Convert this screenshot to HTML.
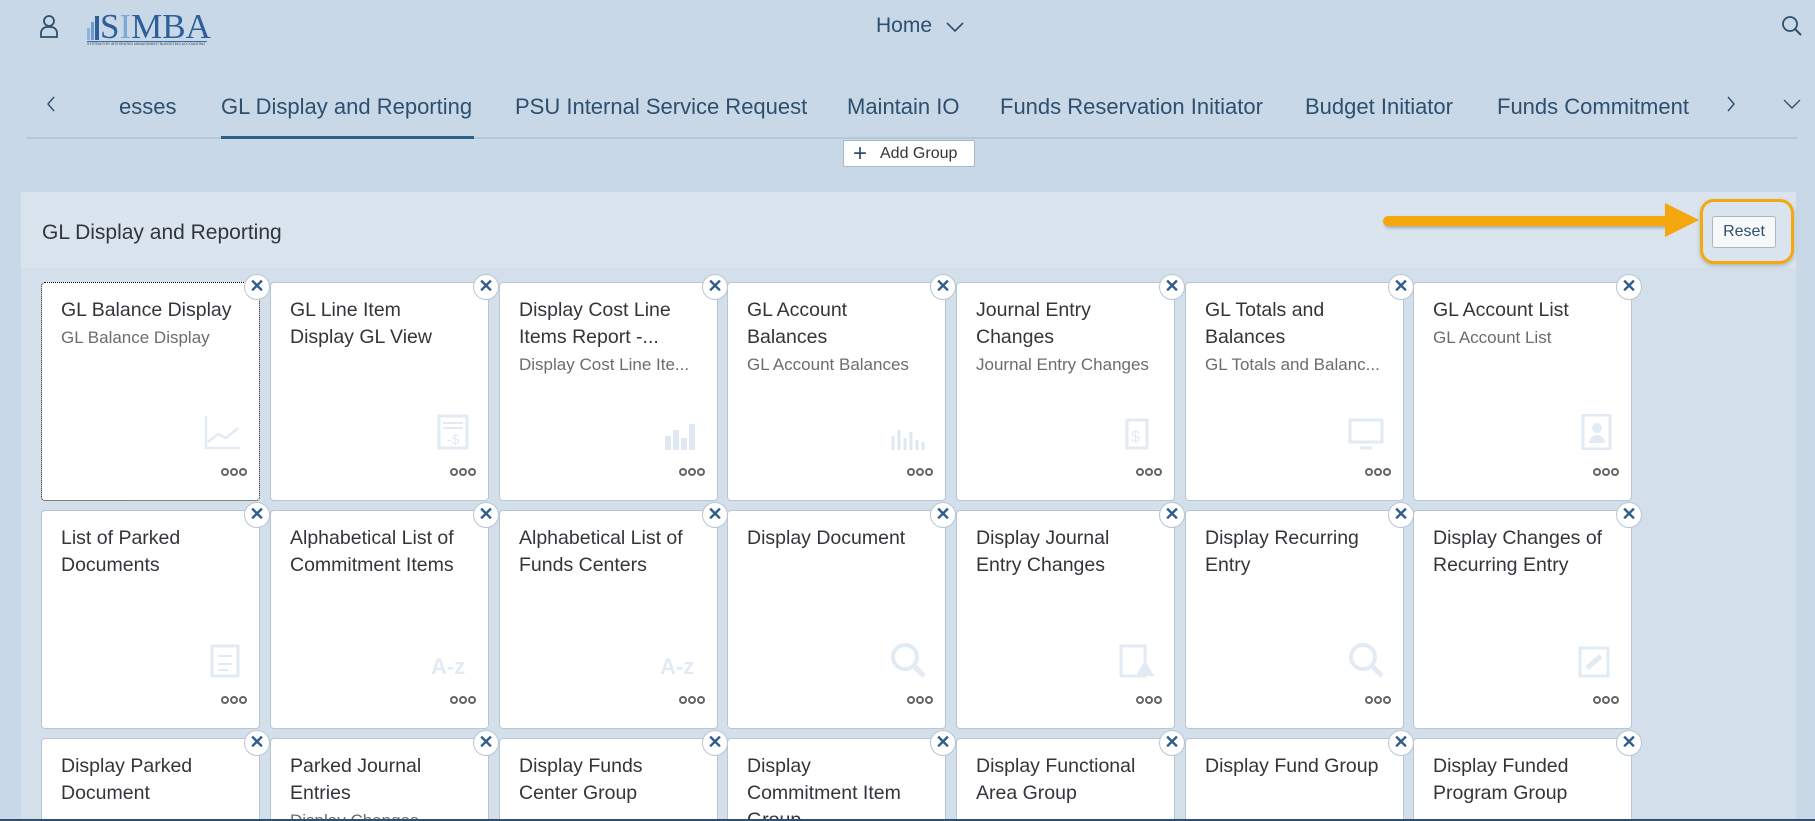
<!DOCTYPE html>
<html><head><meta charset="utf-8">
<style>
*{box-sizing:border-box;margin:0;padding:0}
html,body{width:1815px;height:821px;overflow:hidden}
body{background:#c8d8e7;font-family:"Liberation Sans",sans-serif}
#w{position:relative;width:1815px;height:821px;overflow:hidden}
.abs{position:absolute}
.tab{position:absolute;top:94px;font-size:22px;color:#2e4f6e;white-space:nowrap}
.tile{position:absolute;width:219px;height:219px;background:#fff;border:1px solid #b8c6d3;border-radius:4px}
.tile.r3{height:83px;border-bottom:none;border-radius:4px 4px 0 0;overflow:visible}
.tile .t{position:absolute;left:19px;top:14px;right:25px;font-size:19.5px;line-height:27px;color:#32363a}
.tile.r3 .t{height:68px;overflow:hidden}
.tile .s{font-size:17px;color:#6a6d70;line-height:27px;white-space:nowrap;overflow:hidden;text-overflow:ellipsis;margin-right:-10px}
.tile .x{position:absolute;right:-11px;top:-9px;width:26px;height:26px;border-radius:50%;background:#fff;border:1px solid #b8c6d3;color:#2f5e8c;font-size:18px;line-height:23px;text-align:center;font-weight:bold}
.tile .d{position:absolute;right:12px;bottom:22px;font-size:10px;line-height:8px}
.tile .d i{display:inline-block;width:8px;height:8px;border:2px solid #666;border-radius:50%;margin-left:1px}
.tile svg{position:absolute;right:19px;bottom:50px}
</style></head><body><div id="w">
<!-- header -->
<svg class="abs" style="left:39px;top:14px" width="20" height="24" viewBox="0 0 20 24"><circle cx="10" cy="7" r="5" fill="none" stroke="#2e4f6e" stroke-width="1.8"/><path d="M2 23v-4a6 6 0 0 1 6-6h4a6 6 0 0 1 6 6v4z" fill="none" stroke="#2e4f6e" stroke-width="1.8"/></svg>
<div class="abs" style="left:87px;top:10px;width:120px;height:36px">
 <div class="abs" style="left:0;top:18px;width:3px;height:12px;background:#8ab4dc"></div>
 <div class="abs" style="left:4px;top:12px;width:3px;height:18px;background:#6a9bd0"></div>
 <div class="abs" style="left:8px;top:6px;width:4px;height:24px;background:#2e5f9a"></div>
 <div class="abs" style="left:13px;top:2px;font-family:'Liberation Serif',serif;font-size:35px;line-height:30px;color:#2e5f9a">S<span style="color:#7fa9d6">I</span>MBA</div>
 <div class="abs" style="left:0;top:31px;width:120px;height:1px;background:#3a6ea5"></div>
 <div class="abs" style="left:0;top:33px;font-size:3.5px;line-height:3px;color:#345;white-space:nowrap">SYSTEM FOR INTEGRATED MANAGEMENT BUDGETING ACCOUNTING</div>
</div>
<div class="abs" style="left:876px;top:14px;font-size:21px;color:#2e4f6e">Home</div>
<svg class="abs" style="left:945px;top:21px" width="20" height="12"><path d="M2 2l8 8 8-8" fill="none" stroke="#2e4f6e" stroke-width="1.6"/></svg>
<svg class="abs" style="left:1781px;top:15px" width="22" height="22"><circle cx="9" cy="9" r="7" fill="none" stroke="#2e4f6e" stroke-width="1.8"/><path d="M14 14l6 6" stroke="#2e4f6e" stroke-width="2"/></svg>
<!-- tabs -->
<svg class="abs" style="left:46px;top:96px" width="10" height="16"><path d="M8 1L2 8l6 7" fill="none" stroke="#2e4f6e" stroke-width="1.4"/></svg>
<div class="tab" style="left:119px">esses</div>
<div class="tab" style="left:221px">GL Display and Reporting</div>
<div class="tab" style="left:515px">PSU Internal Service Request</div>
<div class="tab" style="left:847px">Maintain IO</div>
<div class="tab" style="left:1000px">Funds Reservation Initiator</div>
<div class="tab" style="left:1305px">Budget Initiator</div>
<div class="tab" style="left:1497px">Funds Commitment</div>
<svg class="abs" style="left:1726px;top:96px" width="10" height="16"><path d="M2 1l6 7-6 7" fill="none" stroke="#2e4f6e" stroke-width="1.4"/></svg>
<svg class="abs" style="left:1782px;top:98px" width="20" height="12"><path d="M2 2l8 8 8-8" fill="none" stroke="#2e4f6e" stroke-width="1.4"/></svg>
<div class="abs" style="left:27px;top:137px;width:1770px;height:2px;background:#b5c8da"></div>
<div class="abs" style="left:221px;top:136px;width:253px;height:3px;background:#2e5f8c"></div>
<div class="abs" style="left:843px;top:140px;width:132px;height:27px;background:#fff;border:1px solid #a8b8c8;border-radius:2px;font-size:16px;color:#32363a;line-height:25px;padding-left:36px">Add Group</div>
<div class="abs" style="left:853px;top:144px;font-size:24px;line-height:20px;color:#2e4f6e">+</div>
<!-- panel -->
<div class="abs" style="left:21px;top:192px;width:1775px;height:629px;background:#d3dfea"></div>
<div class="abs" style="left:21px;top:192px;width:1775px;height:76px;background:#d9e4ee"></div>
<div class="abs" style="left:42px;top:221px;font-size:21px;color:#32363a">GL Display and Reporting</div>
<div class="abs" style="left:1383px;top:216px;width:290px;height:10px;background:#f5a70e;border-radius:5px;box-shadow:1px 2px 3px rgba(0,0,0,.25)"></div>
<svg class="abs" style="left:1665px;top:203px" width="36" height="36"><path d="M0 0L34 17 0 34z" fill="#f5a70e"/></svg>
<div class="abs" style="left:1700px;top:199px;width:94px;height:65px;border:3px solid #f5a70e;border-radius:14px;box-shadow:0 2px 4px rgba(0,0,0,.2)"></div>
<div class="abs" style="left:1712px;top:216px;width:64px;height:32px;background:#f7f8fa;border:1px solid #a8b8c8;border-radius:3px;font-size:16px;color:#2e4f6e;text-align:center;line-height:30px">Reset</div>

<!-- row 1 -->
<div class="tile" style="left:41px;top:282px;border:1px dotted #000"><div class="t">GL Balance Display<div class="s">GL Balance Display</div></div><svg width="36" height="36"><path d="M2 2v32h34M4 28l10-8 8 4 12-10" fill="none" stroke="#e2ebf4" stroke-width="2.5"/></svg><div class="x">✕</div><div class="d"><i></i><i></i><i></i></div></div>
<div class="tile" style="left:270px;top:282px"><div class="t">GL Line Item Display GL View</div><svg width="32" height="36"><rect x="2" y="2" width="28" height="32" fill="none" stroke="#e2ebf4" stroke-width="3"/><path d="M6 9h20M6 14h20" stroke="#e2ebf4" stroke-width="2"/><text x="10" y="30" font-size="14" fill="#e2ebf4" font-family="Liberation Sans">-$</text></svg><div class="x">✕</div><div class="d"><i></i><i></i><i></i></div></div>
<div class="tile" style="left:499px;top:282px"><div class="t">Display Cost Line Items Report -...<div class="s">Display Cost Line Ite...</div></div><svg width="34" height="34"><path d="M4 34V20M12 34V14M20 34V22M28 34V8" stroke="#dfe8f2" stroke-width="6"/></svg><div class="x">✕</div><div class="d"><i></i><i></i><i></i></div></div>
<div class="tile" style="left:727px;top:282px"><div class="t">GL Account Balances<div class="s">GL Account Balances</div></div><svg width="36" height="24"><path d="M3 24V10M9 24V4M15 24V12M21 24V6M27 24V14M33 24V16" stroke="#dfe8f2" stroke-width="3"/></svg><div class="x">✕</div><div class="d"><i></i><i></i><i></i></div></div>
<div class="tile" style="left:956px;top:282px"><div class="t">Journal Entry Changes<div class="s">Journal Entry Changes</div></div><svg width="30" height="36"><path d="M2 6h20v28H2z" fill="none" stroke="#e2ebf4" stroke-width="3"/><text x="6" y="28" font-size="16" fill="#e2ebf4">$</text></svg><div class="x">✕</div><div class="d"><i></i><i></i><i></i></div></div>
<div class="tile" style="left:1185px;top:282px"><div class="t">GL Totals and Balances<div class="s">GL Totals and Balanc...</div></div><svg width="36" height="32"><rect x="2" y="2" width="32" height="22" fill="none" stroke="#e2ebf4" stroke-width="3"/><path d="M12 30h12" stroke="#e2ebf4" stroke-width="3"/></svg><div class="x">✕</div><div class="d"><i></i><i></i><i></i></div></div>
<div class="tile" style="left:1413px;top:282px"><div class="t">GL Account List<div class="s">GL Account List</div></div><svg width="32" height="36"><rect x="3" y="1" width="27" height="34" fill="none" stroke="#e2ebf4" stroke-width="3"/><circle cx="17" cy="14" r="5" fill="#e2ebf4"/><path d="M9 29a8 8 0 0 1 16 0z" fill="#e2ebf4"/></svg><div class="x">✕</div><div class="d"><i></i><i></i><i></i></div></div>
<!-- row 2 -->
<div class="tile" style="left:41px;top:510px"><div class="t">List of Parked Documents</div><svg width="30" height="36"><rect x="2" y="4" width="26" height="30" fill="none" stroke="#e2ebf4" stroke-width="3"/><path d="M8 14h14M8 22h14M8 28h10" stroke="#e2ebf4" stroke-width="2"/></svg><div class="x">✕</div><div class="d"><i></i><i></i><i></i></div></div>
<div class="tile" style="left:270px;top:510px"><div class="t">Alphabetical List of Commitment Items</div><svg width="38" height="26"><text x="0" y="22" font-size="22" font-weight="bold" fill="#e2ebf4" font-family="Liberation Sans">A-z</text></svg><div class="x">✕</div><div class="d"><i></i><i></i><i></i></div></div>
<div class="tile" style="left:499px;top:510px"><div class="t">Alphabetical List of Funds Centers</div><svg width="38" height="26"><text x="0" y="22" font-size="22" font-weight="bold" fill="#e2ebf4" font-family="Liberation Sans">A-z</text></svg><div class="x">✕</div><div class="d"><i></i><i></i><i></i></div></div>
<div class="tile" style="left:727px;top:510px"><div class="t">Display Document</div><svg width="36" height="36"><circle cx="15" cy="15" r="12" fill="none" stroke="#e2ebf4" stroke-width="4"/><path d="M24 24l10 10" stroke="#e2ebf4" stroke-width="5"/></svg><div class="x">✕</div><div class="d"><i></i><i></i><i></i></div></div>
<div class="tile" style="left:956px;top:510px"><div class="t">Display Journal Entry Changes</div><svg width="36" height="36"><rect x="2" y="4" width="24" height="30" fill="none" stroke="#e2ebf4" stroke-width="3"/><path d="M26 18l9 16H17z" fill="#e2ebf4"/></svg><div class="x">✕</div><div class="d"><i></i><i></i><i></i></div></div>
<div class="tile" style="left:1185px;top:510px"><div class="t">Display Recurring Entry</div><svg width="36" height="36"><circle cx="15" cy="15" r="12" fill="none" stroke="#e2ebf4" stroke-width="4"/><path d="M24 24l10 10" stroke="#e2ebf4" stroke-width="5"/></svg><div class="x">✕</div><div class="d"><i></i><i></i><i></i></div></div>
<div class="tile" style="left:1413px;top:510px"><div class="t">Display Changes of Recurring Entry</div><svg width="34" height="36"><rect x="2" y="6" width="28" height="28" fill="none" stroke="#e2ebf4" stroke-width="3"/><path d="M9 26l14-12" stroke="#e2ebf4" stroke-width="5"/></svg><div class="x">✕</div><div class="d"><i></i><i></i><i></i></div></div>
<!-- row 3 -->
<div class="tile r3" style="left:41px;top:738px"><div class="t">Display Parked Document</div><div class="x">✕</div></div>
<div class="tile r3" style="left:270px;top:738px"><div class="t">Parked Journal Entries<div class="s">Display Changes</div></div><div class="x">✕</div></div>
<div class="tile r3" style="left:499px;top:738px"><div class="t">Display Funds Center Group</div><div class="x">✕</div></div>
<div class="tile r3" style="left:727px;top:738px"><div class="t">Display Commitment Item Group</div><div class="x">✕</div></div>
<div class="tile r3" style="left:956px;top:738px"><div class="t">Display Functional Area Group</div><div class="x">✕</div></div>
<div class="tile r3" style="left:1185px;top:738px"><div class="t" style="white-space:nowrap">Display Fund Group</div><div class="x">✕</div></div>
<div class="tile r3" style="left:1413px;top:738px"><div class="t">Display Funded Program Group</div><div class="x">✕</div></div>
<div class="abs" style="left:0;top:819px;width:1815px;height:2px;background:#2e4f6e"></div>
</div></body></html>
